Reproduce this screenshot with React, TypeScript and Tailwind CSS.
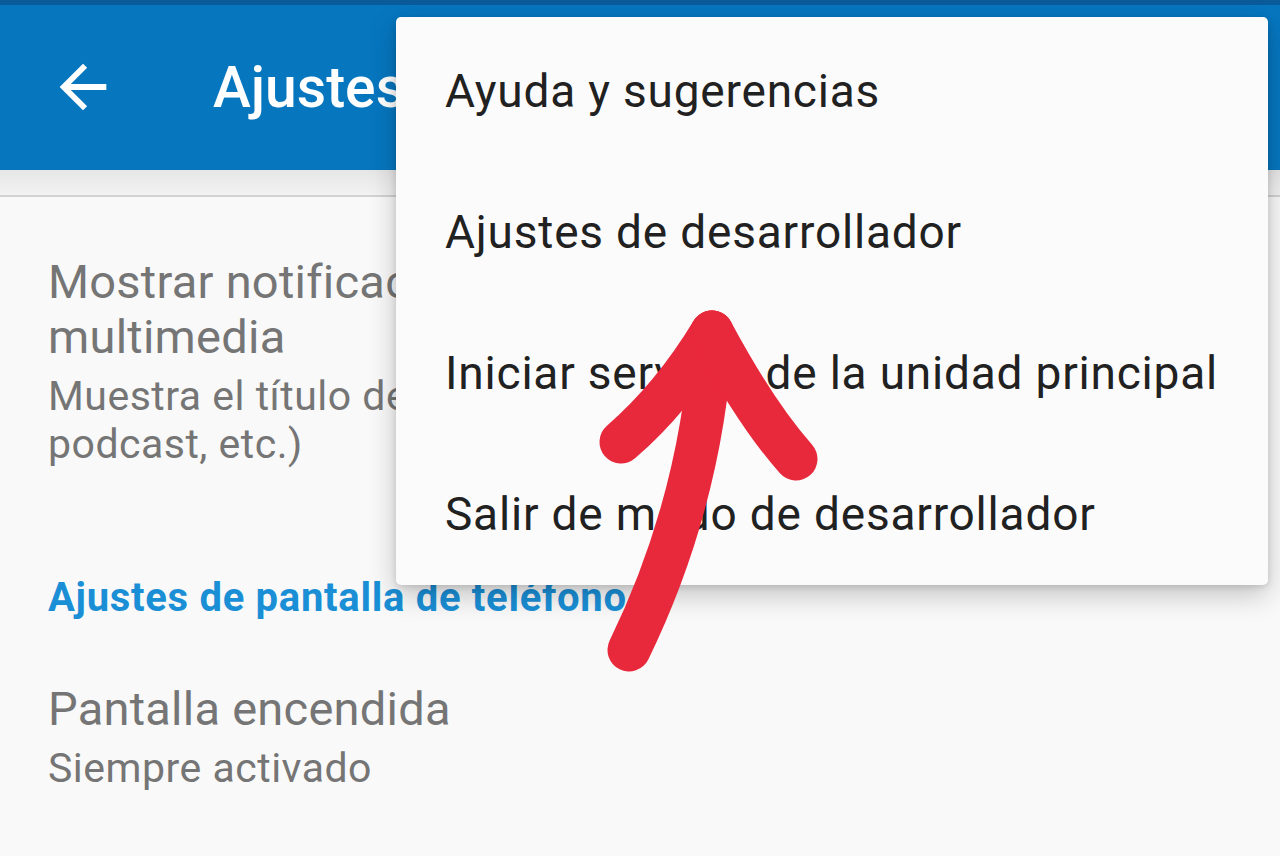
import React from "react";

const menuItems = [
  "Ayuda y sugerencias",
  "Ajustes de desarrollador",
  "Iniciar servicio de la unidad principal",
  "Salir de modo de desarrollador",
];

function BackArrow() {
  return (
    <svg viewBox="0 0 24 24" className="h-[70px] w-[70px]" fill="#ffffff">
      <path d="M20 11H7.83l5.59-5.59L12 4l-8 8 8 8 1.41-1.41L7.83 13H20v-2z" />
    </svg>
  );
}

// trazo rojo dibujado a mano sobre la captura
function RedArrow() {
  return (
    <svg
      className="pointer-events-none absolute inset-0 h-full w-full"
      viewBox="0 0 1280 856"
      fill="none"
    >
      <g stroke="#e8283b" strokeWidth={43} strokeLinecap="round" strokeLinejoin="round">
        <path d="M629 650 Q702 500 712 332" />
        <path d="M712 332 Q672 398 621 442" />
        <path d="M712 332 Q756 414 796 459" />
      </g>
    </svg>
  );
}

export default function App() {
  return (
    <div
      className="relative h-[856px] w-[1280px] overflow-hidden bg-[#f9f9f9]"
      style={{ fontFamily: "Roboto, 'Noto Sans', sans-serif" }}
    >
      {/* barra superior */}
      <div className="h-[5px] bg-[#0b5a9a]" />
      <header className="flex h-[165px] items-center bg-[#0676bf]">
        <div className="ml-[48px] mt-[-2px] flex items-center">
          <BackArrow />
        </div>
        <h1 className="ml-[95px] text-[57px] font-medium leading-none text-white">
          Ajustes
        </h1>
      </header>
      <div className="h-[25px] bg-gradient-to-b from-[#e6e6e6] to-[#f3f3f3]" />
      <div className="h-[2px] bg-[#d2d2d2]" />

      {/* lista de ajustes (el menú tapa la parte derecha) */}
      <main className="flex flex-col px-[48px] pt-[57px]">
        <div className="flex flex-col">
          <span className="whitespace-nowrap text-[47px] leading-[55px] tracking-[0.25px] text-[#757575]">
            Mostrar notificación de
          </span>
          <span className="whitespace-nowrap text-[47px] leading-[55px] tracking-[0.25px] text-[#757575]">
            multimedia
          </span>
          <span className="mt-[8px] whitespace-nowrap text-[41px] leading-[48px] tracking-[0.5px] text-[#757575]">
            Muestra el título de
          </span>
          <span className="whitespace-nowrap text-[41px] leading-[48px] tracking-[0.5px] text-[#757575]">
            podcast, etc.)
          </span>
        </div>

        <div className="mt-[108px] whitespace-nowrap text-[40px] font-bold leading-[44px] tracking-[0.7px] text-[#1a8fd6]">
          Ajustes de pantalla de teléfono
        </div>

        <div className="mt-[61px] flex flex-col">
          <span className="whitespace-nowrap text-[47px] leading-[55px] tracking-[0.25px] text-[#757575]">
            Pantalla encendida
          </span>
          <span className="mt-[8px] whitespace-nowrap text-[41px] leading-[48px] tracking-[0.5px] text-[#757575]">
            Siempre activado
          </span>
        </div>
      </main>

      {/* menú desplegable */}
      <div className="absolute left-[396px] top-[17px] w-[872px] rounded-[5px] bg-[#fbfbfb] pt-[4px] shadow-[0_10px_28px_rgba(0,0,0,0.22),0_2px_6px_rgba(0,0,0,0.12)]">
        {menuItems.map((item) => (
          <div
            key={item}
            className="h-[141px] whitespace-nowrap pl-[49px] text-[46px] leading-[141px] tracking-[0.8px] text-[#212121]"
          >
            {item}
          </div>
        ))}
      </div>

      <RedArrow />
    </div>
  );
}
